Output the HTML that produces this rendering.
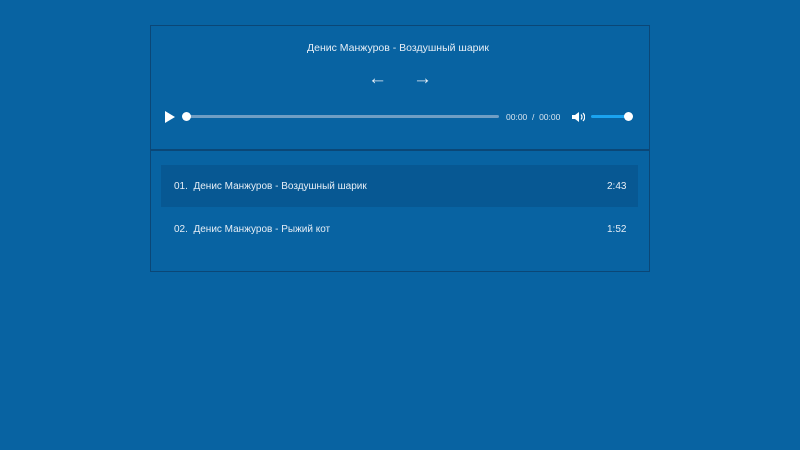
<!DOCTYPE html>
<html><head><meta charset="utf-8"><style>
*{margin:0;padding:0;box-sizing:border-box}
body{width:800px;height:450px;background:#0863a2;font-family:"Liberation Sans","DejaVu Sans",sans-serif;color:#e6eef6;position:relative;overflow:hidden}
.box{position:absolute;left:150px;top:25px;width:500px;height:247px;border:1px solid #0b4777}
.div{position:absolute;left:150px;top:149px;width:500px;height:2px;background:#0b4777}
.t{position:absolute;font-size:10px;white-space:nowrap}
.hl{position:absolute;left:161px;top:165px;width:477px;height:42px;background:#075893}
</style></head><body>
<div class="box"></div>
<div class="div"></div>
<div class="t" style="left:0;width:796px;text-align:center;top:42px;font-size:10.5px">Денис Манжуров - Воздушный шарик</div>
<div class="t" style="left:368px;top:68px;font-size:19px;font-weight:bold">←</div>
<div class="t" style="left:413px;top:68px;font-size:19px;font-weight:bold">→</div>
<svg style="position:absolute;left:164px;top:110px" width="12" height="14"><path d="M1 1 L11 7 L1 13Z" fill="#fff"/></svg>
<div style="position:absolute;left:185px;top:115px;width:314px;height:3px;background:#6f9ec4;border-radius:2px"></div>
<div style="position:absolute;left:182px;top:112px;width:9px;height:9px;border-radius:50%;background:#fff"></div>
<div class="t" style="left:506px;top:112px;font-size:8.5px;color:#d8e4ef">00:00 &nbsp;/ &nbsp;00:00</div>
<svg style="position:absolute;left:571px;top:111px" width="14" height="12"><path d="M1 4h3l4-3v10l-4-3H1z" fill="#fff"/><path d="M10 3.5q2 2.5 0 5M12 2q3.5 4 0 8" stroke="#fff" fill="none" stroke-width="1.2"/></svg>
<div style="position:absolute;left:591px;top:115px;width:38px;height:3px;background:#1aa3f0;border-radius:2px"></div>
<div style="position:absolute;left:624px;top:112px;width:9px;height:9px;border-radius:50%;background:#fff"></div>
<div class="hl"></div>
<div class="t" style="left:174px;top:181px">01.&nbsp; Денис Манжуров - Воздушный шарик</div>
<div class="t" style="left:607px;top:181px">2:43</div>
<div class="t" style="left:174px;top:224px">02.&nbsp; Денис Манжуров - Рыжий кот</div>
<div class="t" style="left:607px;top:224px">1:52</div>
</body></html>
